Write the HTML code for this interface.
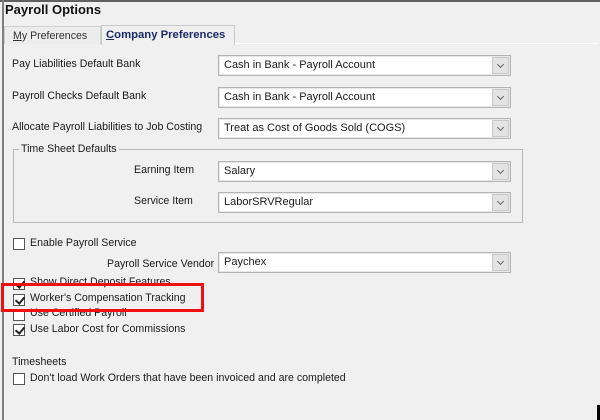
<!DOCTYPE html>
<html><head><style>
*{margin:0;padding:0;box-sizing:border-box}
body{width:600px;height:420px;background:#f0f0f0;font-family:"Liberation Sans",sans-serif;font-size:10.6px;color:#1a1a1a;position:relative;overflow:hidden}
.a{position:absolute;white-space:nowrap}
.combo{position:absolute;left:218px;width:293px;height:21px;background:#fff;border:1px solid #b4b4b4;box-shadow:inset 0 0 0 1px #e8e8e8}
.combo span{position:absolute;left:5px;top:3px;font-size:11px}
.combo i{position:absolute;right:1px;top:1px;width:17px;height:17px;background:#e3e3e3;border:1px solid #c8c8c8}
.combo i:after{content:"";position:absolute;left:5px;top:4px;width:4px;height:4px;border-right:1px solid #666;border-bottom:1px solid #666;transform:rotate(45deg)}
.chk{position:absolute;left:13px;width:12px;height:12px;border:1px solid #555;background:#fff}
.chk.on:after{content:"";position:absolute;left:3px;top:0px;width:4px;height:7px;border-right:2px solid #222;border-bottom:2px solid #222;transform:rotate(40deg)}
</style></head><body>
<div class="a" style="left:0;top:0;width:600px;height:2px;background:#606060"></div>
<div class="a" style="left:2px;top:0;width:2px;height:420px;background:#808080"></div>
<div class="a" style="left:597px;top:405px;width:3px;height:15px;background:#000"></div>
<div class="a" style="left:5px;top:2px;font-size:13px;font-weight:bold;color:#111">Payroll Options</div>
<div class="a" style="left:4px;top:43px;width:594px;height:1px;background:#fff"></div>
<div class="a" style="left:4px;top:26px;width:97px;height:18px;border:1px solid #d0d0d0;border-bottom:none;background:#ececec"></div>
<div class="a" style="left:13px;top:30px;color:#333"><u>M</u>y Preferences</div>
<div class="a" style="left:101px;top:25px;width:134px;height:20px;border:1px solid #c8c8c8;border-bottom:none;background:#f0f0f0"></div>
<div class="a" style="left:106px;top:29px;font-weight:bold;font-size:11.3px;color:#1b2a6b"><u>C</u>ompany Preferences</div>

<div class="a" style="left:12px;top:58px">Pay Liabilities Default Bank</div>
<div class="combo" style="top:55px"><span>Cash in Bank - Payroll Account</span><i></i></div>
<div class="a" style="left:12px;top:90px">Payroll Checks Default Bank</div>
<div class="combo" style="top:87px"><span>Cash in Bank - Payroll Account</span><i></i></div>
<div class="a" style="left:12px;top:121px">Allocate Payroll Liabilities to Job Costing</div>
<div class="combo" style="top:118px"><span>Treat as Cost of Goods Sold (COGS)</span><i></i></div>

<div class="a" style="left:13px;top:149px;width:510px;height:74px;border:1px solid #b8b8b8"></div>
<div class="a" style="left:19px;top:143px;background:#f0f0f0;padding:0 2px">Time Sheet Defaults</div>
<div class="a" style="left:134px;top:164px">Earning Item</div>
<div class="combo" style="top:161px"><span>Salary</span><i></i></div>
<div class="a" style="left:134px;top:195px">Service Item</div>
<div class="combo" style="top:192px"><span>LaborSRVRegular</span><i></i></div>

<div class="chk" style="top:238px"></div>
<div class="a" style="left:30px;top:237px">Enable Payroll Service</div>
<div class="a" style="left:107px;top:258px">Payroll Service Vendor</div>
<div class="combo" style="top:252px"><span>Paychex</span><i></i></div>
<div class="chk on" style="top:278px"></div>
<div class="a" style="left:30px;top:276px">Show Direct Deposit Features</div>
<div class="chk on" style="top:294px"></div>
<div class="a" style="left:30px;top:292px">Worker's Compensation Tracking</div>
<div class="chk" style="top:309px"></div>
<div class="a" style="left:30px;top:307px">Use Certified Payroll</div>
<div class="chk on" style="top:324px"></div>
<div class="a" style="left:30px;top:323px">Use Labor Cost for Commissions</div>
<div class="a" style="left:1px;top:283px;width:203px;height:29px;border:3px solid #f01010"></div>

<div class="a" style="left:12px;top:356px">Timesheets</div>
<div class="chk" style="top:373px"></div>
<div class="a" style="left:30px;top:372px">Don't load Work Orders that have been invoiced and are completed</div>
</body></html>
